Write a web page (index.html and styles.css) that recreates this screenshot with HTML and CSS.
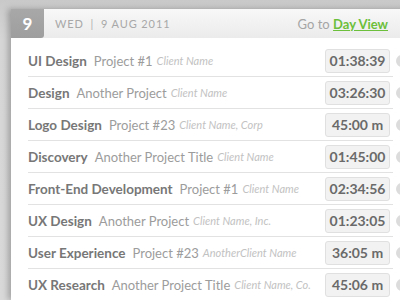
FILE: index.html
```html
<!DOCTYPE html>
<html>
<head>
  <title>Timesheet - Wed 9 Aug 2011</title>
  <link rel="stylesheet" href="styles.css">
</head>
<body>
  <div class="card">
    <div class="head">
      <div class="day">9</div>
      <div class="date">WED <span class="sep">|</span> 9 AUG 2011</div>
      <div class="goto">Go to <a href="#">Day View</a></div>
    </div>

    <div class="list">
      <div class="row">
        <div class="line">
          <span class="task">UI Design</span>
          <span class="project">Project #1</span>
          <span class="client">Client Name</span>
          <span class="time">01:38:39</span>
        </div>
        <span class="dot"></span>
      </div>
      <div class="row">
        <div class="line">
          <span class="task">Design</span>
          <span class="project">Another Project</span>
          <span class="client">Client Name</span>
          <span class="time">03:26:30</span>
        </div>
        <span class="dot"></span>
      </div>
      <div class="row">
        <div class="line">
          <span class="task">Logo Design</span>
          <span class="project">Project #23</span>
          <span class="client">Client Name, Corp</span>
          <span class="time">45:00 m</span>
        </div>
        <span class="dot"></span>
      </div>
      <div class="row">
        <div class="line">
          <span class="task">Discovery</span>
          <span class="project">Another Project Title</span>
          <span class="client">Client Name</span>
          <span class="time">01:45:00</span>
        </div>
        <span class="dot"></span>
      </div>
      <div class="row">
        <div class="line">
          <span class="task">Front-End Development</span>
          <span class="project">Project #1</span>
          <span class="client">Client Name</span>
          <span class="time">02:34:56</span>
        </div>
        <span class="dot"></span>
      </div>
      <div class="row">
        <div class="line">
          <span class="task">UX Design</span>
          <span class="project">Another Project</span>
          <span class="client">Client Name, Inc.</span>
          <span class="time">01:23:05</span>
        </div>
        <span class="dot"></span>
      </div>
      <div class="row">
        <div class="line">
          <span class="task">User Experience</span>
          <span class="project">Project #23</span>
          <span class="client">AnotherClient Name</span>
          <span class="time">36:05 m</span>
        </div>
        <span class="dot"></span>
      </div>
      <div class="row">
        <div class="line">
          <span class="task">UX Research</span>
          <span class="project">Another Project Title</span>
          <span class="client">Client Name, Co.</span>
          <span class="time">45:06 m</span>
        </div>
        <span class="dot"></span>
      </div>
    </div>
  </div>
</body>
</html>
```
FILE: styles.css
```css
body {
  margin: 0;
  padding: 0;
  height: 300px;
  overflow: hidden;
  font-family: Lato, "Open Sans", sans-serif;
  background: linear-gradient(to bottom, #c9c9c9, #d6d6d6 40px, #d9d9d9);
}

.card {
  width: 397px;
  height: 291px;
  margin: 9px 0 0 11px;
  background: #fff;
  box-shadow: -3px 0 6px rgba(0,0,0,0.25);
}

.head {
  display: flex;
  align-items: center;
  width: 389px;
  height: 29px;
  background: linear-gradient(to bottom, #f8f8f8, #ebebeb);
}

.day {
  width: 33px;
  height: 29px;
  display: flex;
  align-items: center;
  justify-content: center;
  background: linear-gradient(to bottom, #a8a8a8, #9e9e9e);
  border-bottom-right-radius: 3px;
  color: #fff;
  font-weight: bold;
  font-size: 17px;
}

.date {
  margin-left: 11px;
  font-size: 11px;
  letter-spacing: 0.9px;
  color: #a8a8a8;
}

.sep {
  margin: 0 3px;
  color: #b0b0b0;
}

.goto {
  margin-left: auto;
  padding-right: 12px;
  font-size: 13px;
  color: #a5a5a5;
}

.goto a {
  color: #6cbf3a;
  font-weight: bold;
  text-decoration: underline;
}

.list {
  padding: 7px 0 0 17px;
}

.row {
  display: flex;
  align-items: center;
}

.line {
  flex: 1;
  display: flex;
  align-items: center;
  height: 31px;
  padding-right: 3px;
  border-bottom: 1px solid #e2e2e2;
  white-space: nowrap;
}

.task {
  font-weight: bold;
  font-size: 13.5px;
  color: #777;
}

.project {
  margin-left: 7px;
  font-size: 13px;
  color: #9c9c9c;
}

.client {
  margin-left: 4px;
  font-size: 11px;
  font-style: italic;
  color: #c2c2c2;
}

.time {
  flex: none;
  margin-left: auto;
  width: 63px;
  height: 22px;
  line-height: 22px;
  text-align: center;
  background: #f2f2f2;
  border: 1px solid #e0e0e0;
  border-radius: 3px;
  font-weight: bold;
  font-size: 14px;
  color: #6a6a6a;
}

.dot {
  flex: none;
  width: 12px;
  height: 12px;
  margin-left: 3px;
  border-radius: 50%;
  background: #dcdcdc;
}
```
